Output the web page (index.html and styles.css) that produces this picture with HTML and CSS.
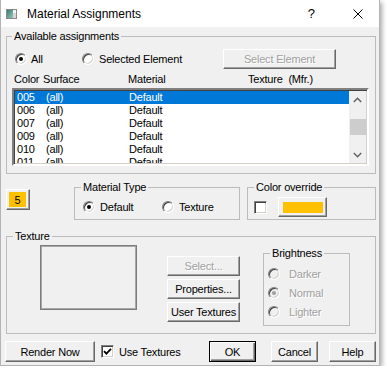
FILE: index.html
```html
<!DOCTYPE html>
<html lang="en">
<head>
  <meta charset="UTF-8" />
  <title>Material Assignments</title>
  <link rel="stylesheet" href="styles.css">
</head>
<body>
  <div class="dlg">
    <!-- Title bar -->
    <div class="dlg__title">
      <svg class="dlg__icon" width="11" height="10" viewBox="0 0 11 10">
        <defs>
          <linearGradient id="ig" x1="0" y1="0" x2="1" y2="1">
            <stop offset="0" stop-color="#2f7f78" />
            <stop offset="1" stop-color="#9cc3b9" />
          </linearGradient>
        </defs>
        <rect x="0.5" y="0.5" width="10" height="9" fill="#d8d8d8" stroke="#8a8a8a" />
        <rect x="1" y="1" width="6" height="8" fill="url(#ig)" />
        <rect x="7" y="1" width="3" height="3" fill="#f4f4f4" />
      </svg>
      <span class="dlg__caption">Material Assignments</span>
      <span class="dlg__help">?</span>
      <svg class="dlg__close" width="10" height="10" viewBox="0 0 10 10">
        <path d="M0.5 0.5 L9.5 9.5 M9.5 0.5 L0.5 9.5" stroke="#000" stroke-width="1" fill="none" />
      </svg>
    </div>

    <div class="dlg__body">
      <!-- Available assignments -->
      <fieldset class="group group--avail">
        <legend>Available assignments</legend>
        <div class="avail__radios">
          <label class="opt opt--all"><span class="radio radio--on"></span>All</label>
          <label class="opt opt--sel"><span class="radio"></span>Selected Element</label>
          <button class="btn btn--selel" disabled>Select Element</button>
        </div>
        <div class="list-head">
          <span class="list-head__color">Color</span>
          <span class="list-head__surface">Surface</span>
          <span class="list-head__material">Material</span>
          <span>Texture&nbsp; (Mfr.)</span>
        </div>
        <div class="listbox">
          <div class="listbox__rows">
            <div class="listbox__row listbox__row--sel"><span class="c-color">005</span><span class="c-surface">(all)</span><span>Default</span></div>
            <div class="listbox__row"><span class="c-color">006</span><span class="c-surface">(all)</span><span>Default</span></div>
            <div class="listbox__row"><span class="c-color">007</span><span class="c-surface">(all)</span><span>Default</span></div>
            <div class="listbox__row"><span class="c-color">009</span><span class="c-surface">(all)</span><span>Default</span></div>
            <div class="listbox__row"><span class="c-color">010</span><span class="c-surface">(all)</span><span>Default</span></div>
            <div class="listbox__row"><span class="c-color">011</span><span class="c-surface">(all)</span><span>Default</span></div>
          </div>
          <div class="scrollbar">
            <div class="scrollbar__arrow">
              <svg width="9" height="6" viewBox="0 0 9 6"><path d="M0.8 5 L4.5 1.3 L8.2 5" stroke="#606060" stroke-width="1.4" fill="none" /></svg>
            </div>
            <div class="scrollbar__thumb"></div>
            <div class="scrollbar__space"></div>
            <div class="scrollbar__arrow">
              <svg width="9" height="6" viewBox="0 0 9 6"><path d="M0.8 1 L4.5 4.7 L8.2 1" stroke="#606060" stroke-width="1.4" fill="none" /></svg>
            </div>
          </div>
        </div>
      </fieldset>

      <!-- Colour swatch, material type, colour override -->
      <div class="mid">
        <div class="swatch"><span class="swatch__fill">5</span></div>
        <fieldset class="group group--mattype">
          <legend>Material Type</legend>
          <div class="opt-row">
            <label class="opt opt--default"><span class="radio radio--on"></span>Default</label>
            <label class="opt"><span class="radio"></span>Texture</label>
          </div>
        </fieldset>
        <fieldset class="group group--override">
          <legend>Color override</legend>
          <div class="opt-row">
            <span class="check"></span>
            <button class="btn btn--color"><span class="btn--color__fill"></span></button>
          </div>
        </fieldset>
      </div>

      <!-- Texture -->
      <fieldset class="group group--texture">
        <legend>Texture</legend>
        <div class="tex">
          <div class="tex__preview"></div>
          <div class="tex__buttons">
            <button class="btn" disabled>Select...</button>
            <button class="btn">Properties...</button>
            <button class="btn">User Textures</button>
          </div>
          <fieldset class="group group--bright">
            <legend>Brightness</legend>
            <label class="opt opt--dim"><span class="radio radio--off"></span>Darker</label>
            <label class="opt opt--dim"><span class="radio radio--off radio--on"></span>Normal</label>
            <label class="opt opt--dim"><span class="radio radio--off"></span>Lighter</label>
          </fieldset>
        </div>
      </fieldset>

      <!-- Footer buttons -->
      <div class="footer">
        <button class="btn btn--render">Render Now</button>
        <label class="opt opt--usetex">
          <span class="check check--on">
            <svg width="9" height="9" viewBox="0 0 9 9"><path d="M1 4.2 L3.4 6.6 L8 1.8" stroke="#000" stroke-width="1.8" fill="none" /></svg>
          </span>Use Textures
        </label>
        <button class="btn btn--default btn--ok">OK</button>
        <button class="btn btn--cancel">Cancel</button>
        <button class="btn btn--help">Help</button>
      </div>
    </div>
  </div>
</body>
</html>
```

FILE: styles.css
```css
/* Base */
* {
  box-sizing: border-box;
}
body {
  margin: 0;
  background: #fff;
  font-family: "Liberation Sans", Arial, sans-serif;
  font-size: 11px;
  letter-spacing: -0.2px;
  color: #000;
}

/* Dialog window */
.dlg {
  width: 380px;
  height: 366px;
  display: flex;
  flex-direction: column;
  border: 1px solid #b4b4b4;
  border-top: 0;
  background: #f0f0f0;
  box-shadow: 2px 2px 5px rgba(0, 0, 0, 0.35);
}
.dlg__title {
  height: 27px;
  flex: none;
  display: flex;
  align-items: center;
  background: #fff;
}
.dlg__icon {
  margin-left: 5px;
  margin-top: 0;
}
.dlg__caption {
  margin-left: 10px;
  font-size: 12px;
  letter-spacing: 0;
}
.dlg__help {
  margin-left: auto;
  font-size: 13px;
  letter-spacing: 0;
}
.dlg__close {
  margin-left: 38px;
  margin-right: 16px;
}
.dlg__body {
  flex: 1;
  padding: 3px 3px 0 5px;
}

/* Group boxes */
.group {
  margin: 0;
  padding: 0;
  min-width: 0;
  border: 1px solid #bcbcbc;
}
.group legend {
  padding: 0 2px;
  line-height: 13px;
  margin-left: 6px;
}
.group--avail {
  padding: 6px 6px 7px 5px;
}
.group--avail legend {
  margin-left: 0;
}

/* Radios and checkboxes */
.opt {
  display: flex;
  align-items: center;
  gap: 5px;
}
.radio {
  position: relative;
  width: 12px;
  height: 12px;
  flex: none;
  border-radius: 50%;
  background: #fff;
  border: 1px solid;
  border-color: #808080 #fff #fff #808080;
  box-shadow: inset 1px 1px #404040, inset -1px -1px #d4d0c8;
}
.radio--on::after {
  content: "";
  position: absolute;
  left: 3px;
  top: 3px;
  width: 4px;
  height: 4px;
  border-radius: 50%;
  background: #000;
}
.radio--off {
  background: #f0f0f0;
}
.radio--off.radio--on::after {
  background: #a0a0a0;
}
.check {
  width: 13px;
  height: 13px;
  flex: none;
  display: flex;
  align-items: center;
  justify-content: center;
  background: #fff;
  border: 1px solid;
  border-color: #808080 #fff #fff #808080;
  box-shadow: inset 1px 1px #404040, inset -1px -1px #d4d0c8;
}
.opt--dim {
  color: #a0a0a0;
  text-shadow: 1px 1px #fff;
}

/* Buttons */
.btn {
  height: 20px;
  padding: 0;
  font: inherit;
  letter-spacing: inherit;
  color: #000;
  background: #f0f0f0;
  border: 1px solid;
  border-color: #fff #696969 #696969 #fff;
  box-shadow: inset -1px -1px #a0a0a0;
}
.btn:disabled {
  color: #a0a0a0;
  text-shadow: 1px 1px #fff;
}
.btn--default {
  border-color: #000;
  box-shadow: inset 1px 1px #fff, inset -1px -1px #696969, inset -2px -2px #a0a0a0;
}

/* Available assignments */
.avail__radios {
  height: 20px;
  display: flex;
  align-items: center;
}
.opt--all {
  margin-left: 3px;
  width: 67px;
  gap: 4px;
}
.opt--sel {
  width: 141px;
}
.btn--selel {
  width: 113px;
}
.list-head {
  height: 19px;
  display: flex;
  align-items: center;
  padding-left: 2px;
}
.list-head__color {
  width: 29px;
}
.list-head__surface {
  width: 85px;
}
.list-head__material {
  width: 120px;
}
.listbox {
  height: 78px;
  display: flex;
  background: #fff;
  border: 2px solid;
  border-color: #808080 #fff #fff #808080;
  box-shadow: inset 1px 1px #404040, inset -1px -1px #d4d0c8;
  padding: 1px 1px 1px 1px;
}
.listbox__rows {
  flex: 1;
  overflow: hidden;
}
.listbox__row {
  height: 13px;
  line-height: 13px;
  padding-left: 2px;
  display: flex;
  white-space: nowrap;
}
.listbox__row--sel {
  background: #0078d7;
  color: #fff;
}
.c-color {
  width: 29px;
}
.c-surface {
  width: 83px;
}
.scrollbar {
  width: 17px;
  flex: none;
  display: flex;
  flex-direction: column;
  background: #f0f0f0;
}
.scrollbar__arrow {
  height: 17px;
  display: flex;
  align-items: center;
  justify-content: center;
}
.scrollbar__thumb {
  height: 16px;
  margin: 11px 0 0 1px;
  background: #cdcdcd;
}
.scrollbar__space {
  flex: 1;
}

/* Middle row */
.mid {
  display: flex;
  align-items: flex-start;
  margin-top: 7px;
}
.swatch {
  width: 24px;
  height: 21px;
  margin-top: 8px;
  padding: 2px;
  border: 1px solid;
  border-color: #fff #696969 #696969 #fff;
  box-shadow: inset -1px -1px #a0a0a0;
}
.swatch__fill {
  display: flex;
  align-items: center;
  justify-content: center;
  width: 17px;
  height: 15px;
  background: #ffc000;
  font-size: 11px;
}
.group--mattype {
  width: 166px;
  margin-left: 44px;
  padding: 3px 0 2px 0;
}
.opt-row {
  height: 20px;
  display: flex;
  align-items: center;
}
.opt--default {
  margin-left: 8px;
  width: 79px;
}
.group--override {
  width: 129px;
  margin-left: 7px;
  padding: 3px 0 2px 0;
}
.group--override .check {
  margin-left: 6px;
}
.btn--color {
  width: 49px;
  margin-left: 11px;
  display: flex;
  align-items: center;
  justify-content: center;
}
.btn--color__fill {
  width: 40px;
  height: 11px;
  background: #ffc000;
}

/* Texture */
.group--texture {
  margin-top: 10px;
  padding: 2px 0 7px 0;
}
.tex {
  display: flex;
  align-items: flex-start;
}
.tex__preview {
  width: 97px;
  height: 65px;
  margin-left: 33px;
  border: 1px solid #7c7c7c;
  box-shadow: inset 1px 1px #a8a8a8, inset -1px -1px #a8a8a8;
}
.tex__buttons {
  width: 73px;
  margin-left: 30px;
  margin-top: 11px;
  display: flex;
  flex-direction: column;
  gap: 3px;
}
.group--bright {
  width: 87px;
  margin-left: 23px;
  margin-top: 2px;
  padding: 4px 0 4px 0;
}
.group--bright .opt {
  height: 19px;
  margin-left: 4px;
  gap: 9px;
}

/* Footer */
.footer {
  height: 21px;
  margin-top: 7px;
  display: flex;
  align-items: center;
}
.footer .btn {
  height: 21px;
}
.btn--render {
  width: 90px;
  margin-left: -1px;
}
.opt--usetex {
  margin-left: 6px;
}
.btn--ok {
  width: 47px;
  margin-left: auto;
}
.btn--cancel {
  width: 47px;
  margin-left: 15px;
}
.btn--help {
  width: 47px;
  margin-left: 11px;
}
```
